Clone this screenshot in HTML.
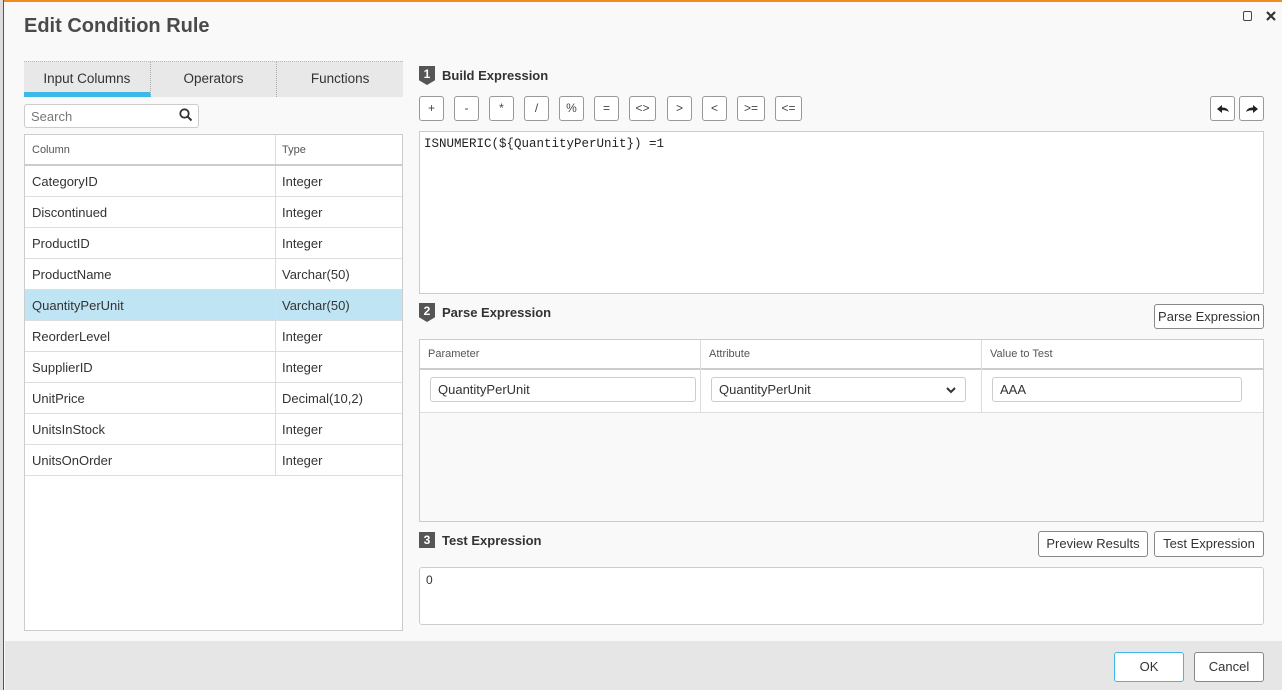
<!DOCTYPE html>
<html><head><style>
*{box-sizing:border-box;margin:0;padding:0}
body{width:1282px;height:690px;overflow:hidden;background:#f9f9f9;font-family:"Liberation Sans",sans-serif;color:#333;position:relative;font-size:13px}
.a{position:absolute}
.edge{left:0;top:0;width:4px;height:690px;background:#ddd;border-right:1px solid #555}
.top{left:4px;top:0;width:1278px;height:2px;background:#f28c1e}
.title{left:24px;top:15px;font-size:20px;font-weight:bold;color:#4a4a4a}
.tabs{left:24px;top:61px;width:379px;height:36px;background:#e8e8e8;border-top:1px dotted #bbb;display:flex}
.tab{flex:1;text-align:center;line-height:33px;font-size:13.5px;border-right:1px dotted #aaa;color:#333}
.tab.on{border-bottom:5px solid #3bb9e8}
.search{left:24px;top:104px;width:175px;height:24px;border:1px solid #ccc;border-radius:3px;background:#fff;padding:4px 6px;color:#777;font-size:13px}
.tbl{left:24px;top:134px;width:379px;height:497px;border:1px solid #ccc;background:#fff}
.row{position:absolute;left:0;width:377px;height:31px;border-bottom:1px solid #ddd;font-size:13px}
.row span{position:absolute;top:8px}
.row .c1{left:7px}.row .c2{left:257px}
.row::after{content:"";position:absolute;left:250px;top:0;bottom:0;border-left:1px solid #ddd}
.hd{font-size:11px;color:#555;border-bottom:2px solid #ccc}
.hd span{top:9px}
.sel{background:#bfe5f5}
.sh{font-size:13px;font-weight:bold;color:#333}
.badge{width:16px;height:16px;background:#555;color:#fff;font-size:12px;text-align:center;line-height:16px;font-weight:bold}
.pin{clip-path:polygon(0 0,100% 0,100% 75%,50% 100%,0 75%);height:19px}
.op{top:96px;height:25px;border:1px solid #999;border-radius:3px;background:#fff;font-size:12px;text-align:center;line-height:22px;color:#444}
.box{background:#fff;border:1px solid #ccc;border-radius:3px}
.btn{border:1px solid #888;border-radius:3px;background:#fff;text-align:center;font-size:13px;color:#333}
.inp{height:25px;border:1px solid #ccc;border-radius:3px;background:#fff;padding:4px 7px;font-size:13px}
</style></head><body>
<div class="a edge"></div>
<div class="a top"></div>
<div class="a title">Edit Condition Rule</div>
<div class="a" style="left:1243px;top:11px;width:9px;height:10px;border:1px solid #444;border-radius:2px"></div>
<svg class="a" style="left:1266px;top:11px" width="10" height="10" viewBox="0 0 10 10"><path d="M1 1L9 9M9 1L1 9" stroke="#333" stroke-width="2.2"/></svg>

<div class="a tabs"><div class="tab on">Input Columns</div><div class="tab">Operators</div><div class="tab" style="border-right:0">Functions</div></div>
<div class="a search">Search</div>
<svg class="a" style="left:179px;top:108px" width="14" height="14" viewBox="0 0 14 14"><circle cx="5.5" cy="5.5" r="4.2" fill="none" stroke="#333" stroke-width="1.8"/><path d="M8.6 8.6L12.5 12.5" stroke="#333" stroke-width="2"/></svg>
<div class="a tbl">
<div class="row hd" style="top:0"><span class="c1">Column</span><span class="c2">Type</span></div>
<div class="row" style="top:31px"><span class="c1">CategoryID</span><span class="c2">Integer</span></div>
<div class="row" style="top:62px"><span class="c1">Discontinued</span><span class="c2">Integer</span></div>
<div class="row" style="top:93px"><span class="c1">ProductID</span><span class="c2">Integer</span></div>
<div class="row" style="top:124px"><span class="c1">ProductName</span><span class="c2">Varchar(50)</span></div>
<div class="row sel" style="top:155px"><span class="c1">QuantityPerUnit</span><span class="c2">Varchar(50)</span></div>
<div class="row" style="top:186px"><span class="c1">ReorderLevel</span><span class="c2">Integer</span></div>
<div class="row" style="top:217px"><span class="c1">SupplierID</span><span class="c2">Integer</span></div>
<div class="row" style="top:248px"><span class="c1">UnitPrice</span><span class="c2">Decimal(10,2)</span></div>
<div class="row" style="top:279px"><span class="c1">UnitsInStock</span><span class="c2">Integer</span></div>
<div class="row" style="top:310px"><span class="c1">UnitsOnOrder</span><span class="c2">Integer</span></div>
</div>

<div class="a badge pin" style="left:419px;top:66px">1</div>
<div class="a sh" style="left:442px;top:68px">Build Expression</div>
<div class="a op" style="left:419px;width:25px">+</div>
<div class="a op" style="left:454px;width:25px">-</div>
<div class="a op" style="left:489px;width:25px">*</div>
<div class="a op" style="left:524px;width:25px">/</div>
<div class="a op" style="left:559px;width:25px">%</div>
<div class="a op" style="left:594px;width:25px">=</div>
<div class="a op" style="left:629px;width:27px">&lt;&gt;</div>
<div class="a op" style="left:667px;width:25px">&gt;</div>
<div class="a op" style="left:702px;width:25px">&lt;</div>
<div class="a op" style="left:737px;width:28px">&gt;=</div>
<div class="a op" style="left:775px;width:27px">&lt;=</div>
<div class="a op" style="left:1210px;width:25px"><svg width="14" height="10" viewBox="0 0 14 10" style="margin-top:7px"><path d="M1 5L6 1V3.5C10 3.5 12 5 13 8C11 6.5 9 6.2 6 6.2V9Z" fill="#222"/></svg></div>
<div class="a op" style="left:1239px;width:25px"><svg width="14" height="10" viewBox="0 0 14 10" style="margin-top:7px"><path d="M13 5L8 1V3.5C4 3.5 2 5 1 8C3 6.5 5 6.2 8 6.2V9Z" fill="#222"/></svg></div>
<div class="a box" style="left:419px;top:131px;width:845px;height:163px;border-radius:0"></div>
<div class="a" style="left:424px;top:137px;font-family:'Liberation Mono',monospace;font-size:12.5px;color:#222">ISNUMERIC(${QuantityPerUnit}) =1</div>

<div class="a badge pin" style="left:419px;top:303px">2</div>
<div class="a sh" style="left:442px;top:305px">Parse Expression</div>
<div class="a btn" style="left:1154px;top:304px;width:110px;height:25px;line-height:23px">Parse Expression</div>
<div class="a" style="left:419px;top:339px;width:845px;height:183px;border:1px solid #ccc;background:#f9f9f9"></div>
<div class="a" style="left:420px;top:340px;width:843px;height:30px;background:#fff;border-bottom:2px solid #ccc"></div>
<div class="a" style="left:420px;top:370px;width:843px;height:43px;background:#fff;border-bottom:1px solid #ddd"></div>
<div class="a" style="left:700px;top:340px;height:73px;border-left:1px solid #ddd"></div>
<div class="a" style="left:981px;top:340px;height:73px;border-left:1px solid #ddd"></div>
<div class="a" style="left:428px;top:348px;font-size:11px;color:#555">Parameter</div>
<div class="a" style="left:709px;top:348px;font-size:11px;color:#555">Attribute</div>
<div class="a" style="left:990px;top:348px;font-size:11px;color:#555">Value to Test</div>
<div class="a inp" style="left:430px;top:377px;width:266px">QuantityPerUnit</div>
<div class="a inp" style="left:711px;top:377px;width:255px">QuantityPerUnit</div>
<svg class="a" style="left:946px;top:387px" width="10" height="7" viewBox="0 0 10 7"><path d="M1 1L5 5L9 1" fill="none" stroke="#333" stroke-width="2"/></svg>
<div class="a inp" style="left:992px;top:377px;width:250px">AAA</div>

<div class="a badge" style="left:419px;top:532px">3</div>
<div class="a sh" style="left:442px;top:533px">Test Expression</div>
<div class="a btn" style="left:1038px;top:531px;width:110px;height:26px;line-height:24px">Preview Results</div>
<div class="a btn" style="left:1154px;top:531px;width:110px;height:26px;line-height:24px">Test Expression</div>
<div class="a box" style="left:419px;top:567px;width:845px;height:58px"></div>
<div class="a" style="left:426px;top:573px;font-size:12px">0</div>

<div class="a" style="left:5px;top:641px;width:1277px;height:49px;background:#e6e6e6"></div>
<div class="a btn" style="left:1114px;top:652px;width:70px;height:30px;line-height:28px;border-color:#3bb9e8">OK</div>
<div class="a btn" style="left:1194px;top:652px;width:70px;height:30px;line-height:28px">Cancel</div>
</body></html>
